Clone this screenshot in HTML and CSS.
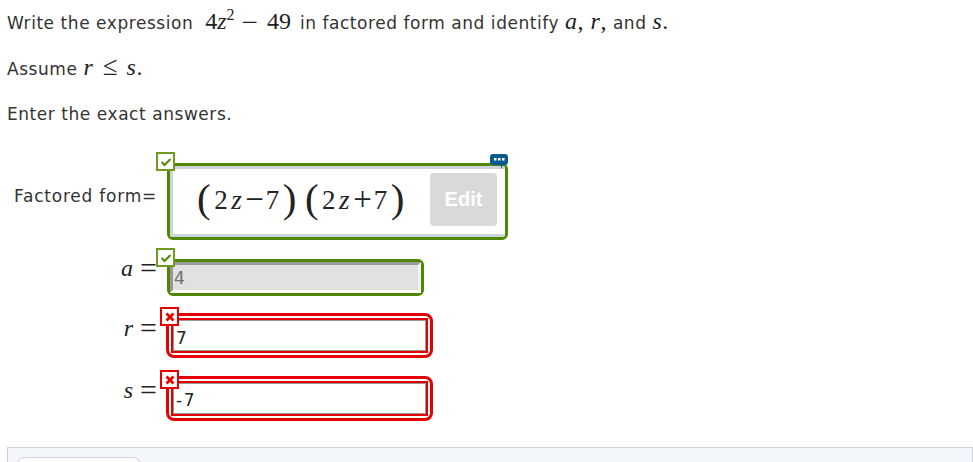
FILE: index.html
```html
<!DOCTYPE html>
<html lang="en">
<head>
    <meta charset="UTF-8">
    <title>Factored form</title>
    <link rel="stylesheet" href="styles.css">
</head>
<body>

<div class="question">
    <p class="line">Write the expression <span class="math expr">4<i>z</i><sup>2</sup> <span class="minus">&minus;</span> 49</span> in factored form and identify <span class="math"><i>a</i>, <i>r</i>,</span> and <span class="math"><i>s</i>.</span></p>
    <p class="line">Assume <span class="math"><i>r</i> <span class="leq">&le;</span> <i>s</i>.</span></p>
    <p class="line">Enter the exact answers.</p>
</div>

<div class="answers">
    <div class="row row-form">
        <div class="label">Factored form=</div>
        <div class="field field-form correct">
            <span class="badge badge-ok">
                <svg viewBox="0 0 12 10" width="12" height="10"><path d="M1.5 5 L4.5 8 L10.5 2" fill="none" stroke="#4f8800" stroke-width="2"/></svg>
            </span>
            <span class="comment">
                <svg viewBox="0 0 18 15" width="18" height="15"><path d="M3 0 H15 Q18 0 18 3 V8 Q18 11 15 11 H13 L11 15 V11 H3 Q0 11 0 8 V3 Q0 0 3 0 Z" fill="#0b5a8e"/><rect x="4" y="4" width="2.5" height="2.5" fill="#fff"/><rect x="8" y="4" width="2.5" height="2.5" fill="#fff"/><rect x="12" y="4" width="2.5" height="2.5" fill="#fff"/></svg>
            </span>
            <div class="formula-box">
                <div class="formula"><span class="paren">(</span>2<i>z</i><span class="op">&minus;</span>7<span class="paren">)</span><span class="paren paren-gap">(</span>2<i>z</i><span class="op">+</span>7<span class="paren">)</span></div>
                <button class="edit">Edit</button>
            </div>
        </div>
    </div>

    <div class="row row-a">
        <div class="label math-label"><i>a</i> <span class="eq">=</span></div>
        <div class="field field-a correct">
            <span class="badge badge-ok">
                <svg viewBox="0 0 12 10" width="12" height="10"><path d="M1.5 5 L4.5 8 L10.5 2" fill="none" stroke="#4f8800" stroke-width="2"/></svg>
            </span>
            <div class="input input-disabled">4</div>
        </div>
    </div>

    <div class="row row-r">
        <div class="label math-label"><i>r</i> <span class="eq">=</span></div>
        <div class="field field-wrong">
            <span class="badge badge-bad">
                <svg viewBox="0 0 10 10" width="10" height="10"><path d="M1.5 1.5 L8.5 8.5 M8.5 1.5 L1.5 8.5" fill="none" stroke="#e60000" stroke-width="2.8"/></svg>
            </span>
            <div class="input">7</div>
        </div>
    </div>

    <div class="row row-s">
        <div class="label math-label"><i>s</i> <span class="eq">=</span></div>
        <div class="field field-wrong">
            <span class="badge badge-bad">
                <svg viewBox="0 0 10 10" width="10" height="10"><path d="M1.5 1.5 L8.5 8.5 M8.5 1.5 L1.5 8.5" fill="none" stroke="#e60000" stroke-width="2.8"/></svg>
            </span>
            <div class="input">-7</div>
        </div>
    </div>
</div>

<div class="footer">
    <div class="footer-tab"></div>
</div>

</body>
</html>
```

FILE: styles.css
```css
html, body {
    height: 462px;
    overflow: hidden;
}
body {
    margin: 0;
    background: #fff;
    color: #333;
    font-family: "DejaVu Sans", Verdana, sans-serif;
    font-size: 17px;
    letter-spacing: 0.55px;
}
.question {
    padding: 10px 0 0 7px;
}
.line {
    margin: 0 0 23px;
    height: 23px;
    line-height: 23px;
    white-space: nowrap;
}
.line:nth-child(2) {
    margin-bottom: 24px;
}
.math {
    font-family: "Liberation Serif", "Times New Roman", serif;
    font-size: 24px;
    color: #222;
    letter-spacing: 0.5px;
}
.expr {
    margin: 0 3px 0 6px;
    letter-spacing: 0;
}
.expr sup {
    font-size: 16px;
    line-height: 0;
}
.minus {
    font-size: 29px;
    line-height: 0;
    margin: 0 3px 0 1px;
    vertical-align: -3px;
}
.leq {
    font-size: 27px;
    line-height: 0;
    margin: 0 2px 0 3px;
}
.answers {
    position: absolute;
    left: 0;
    top: 163px;
    width: 100%;
}
.row {
    display: flex;
    align-items: flex-start;
}
.label {
    width: 157px;
    flex: none;
    text-align: right;
    white-space: nowrap;
}
.math-label {
    font-family: "Liberation Serif", "Times New Roman", serif;
    font-size: 24px;
    line-height: 24px;
    color: #222;
    letter-spacing: 0;
}
.math-label i {
    position: relative;
    top: -2px;
}
.eq {
    font-size: 30px;
    margin-left: 1px;
}
.row-form .label {
    padding-top: 23px;
    letter-spacing: 0.77px;
}
.row-a {
    margin-top: 19px;
}
.row-a .label {
    margin-top: -3px;
}
.row-r {
    margin-top: 17px;
}
.row-s {
    margin-top: 18px;
}
.row-r .label {
    margin-top: 3px;
}
.row-s .label {
    margin-top: 2px;
}
.field {
    position: relative;
    margin-left: 10px;
    box-sizing: border-box;
}
.correct {
    border: 3px solid #4f8800;
    border-radius: 6px;
}
.field-form {
    width: 341px;
    height: 77px;
}
.formula-box {
    box-sizing: border-box;
    height: 100%;
    display: flex;
    align-items: center;
    border: 3px solid #ccd3dd;
    border-right-width: 0;
    padding-left: 24px;
    background: #fff;
    border-radius: 2px;
}
.formula {
    flex: 1;
    margin-top: -5px;
    font-family: "Liberation Serif", "Times New Roman", serif;
    font-size: 27px;
    color: #222;
    letter-spacing: 3.5px;
    white-space: nowrap;
}
.paren {
    font-size: 41px;
    font-weight: normal;
    line-height: 30px;
    vertical-align: -3px;
}
.paren-gap {
    margin-left: 5px;
}
.op {
    font-size: 33px;
    line-height: 0;
    letter-spacing: 1px;
    margin: 0 1px 0 0;
    vertical-align: -1px;
}
.edit {
    width: 67px;
    height: 53px;
    margin: 0 8px 4px 0;
    padding: 0;
    border: 0;
    border-radius: 4px;
    background: #d9d9d9;
    color: #fff;
    font-family: "Liberation Sans", Arial, sans-serif;
    font-size: 20px;
    font-weight: bold;
    letter-spacing: 0;
}
.field-a {
    width: 257px;
    height: 37px;
}
.field-wrong {
    margin-left: 9px;
    width: 267px;
    height: 45px;
    border: 3px solid #e60000;
    border-radius: 8px;
    padding: 2px;
}
.field-wrong .input {
    height: 100%;
    border: 2px solid #e60000;
    box-shadow: inset 0 0 0 1px #999;
}
.row-s .input {
    padding-top: 6px;
    letter-spacing: 1.5px;
}
.input {
    box-sizing: border-box;
    height: 100%;
    padding: 7px 0 0 3px;
    line-height: 22px;
    color: #222;
    background: #fff;
}
.input-disabled {
    border: 3px solid #999;
    border-color: #999 #f4f4f4 #fff #999;
    background: #e1e1e1;
    color: #6f6f6f;
    padding: 2px 0 0 1px;
}
.badge {
    position: absolute;
    left: -14px;
    top: -14px;
    width: 19px;
    height: 19px;
    box-sizing: border-box;
    display: flex;
    align-items: center;
    justify-content: center;
    background: #fff;
    z-index: 2;
}
.badge-ok {
    border: 2px solid #6f9a1f;
}
.badge-bad {
    left: -9px;
    top: -9px;
    border: 2px solid #e60000;
}
.comment {
    position: absolute;
    right: -3px;
    top: -12px;
    line-height: 0;
}
.footer {
    position: absolute;
    left: 7px;
    right: 0;
    top: 447px;
    height: 15px;
    box-sizing: border-box;
    background: #f3f7fb;
    border: 1px solid #ccd3dd;
    border-bottom: 0;
    padding: 9px 0 0 10px;
}
.footer-tab {
    width: 120px;
    height: 10px;
    background: #fff;
    border: 1px solid #ccd3dd;
    border-radius: 6px 6px 0 0;
}
```
